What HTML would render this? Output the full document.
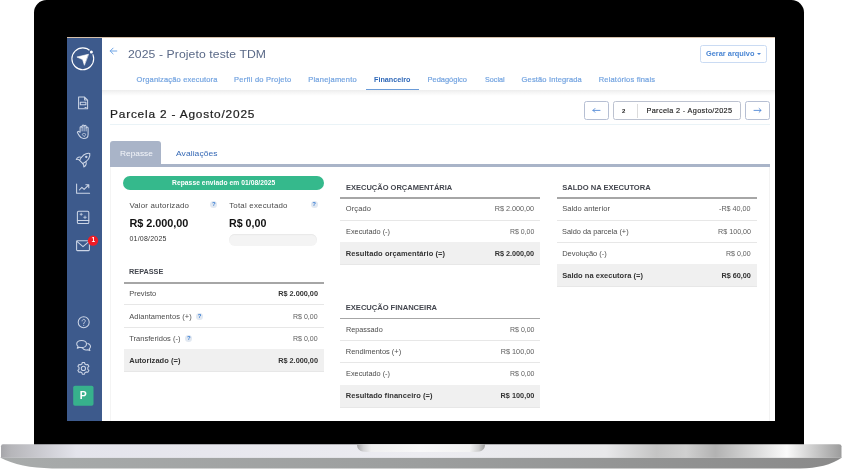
<!DOCTYPE html>
<html lang="pt-BR">
<head>
<meta charset="utf-8">
<title>2025 - Projeto teste TDM</title>
<style>
*{box-sizing:border-box;margin:0;padding:0}
html,body{width:842px;height:470px;overflow:hidden;background:#fff}
body{position:relative;font-family:"Liberation Sans",sans-serif;color:#444}
.abs{position:absolute}
.t{position:absolute;white-space:nowrap;line-height:1;transform-origin:0 50%}
#bezel{left:34px;top:0;width:770.3px;height:444.5px;background:#000;border-radius:12.5px 12.5px 0 0}
#screen{left:67px;top:37px;width:707.6px;height:383.7px;background:#fff;overflow:hidden}
#pg{left:-67px;top:-37px;width:842px;height:470px;will-change:transform}
.ln{position:absolute;height:1px;background:#e7e7e7}
.hl{position:absolute;height:1.5px;background:#a6a6a6}
.gr{position:absolute;background:#f0f0f0}
.q{position:absolute;width:7px;height:7px;border-radius:50%;background:#e1e8f1;color:#3b7fd4;font-size:6px;font-weight:bold;text-align:center;line-height:7.4px}
.btn{position:absolute;border:1px solid #b6bfd3;border-radius:2.5px;background:#fff}
</style>
</head>
<body>
<div id="bezel" class="abs"></div>
<div id="screen" class="abs">
<div id="pg" class="abs">
  <div class="abs" style="left:67px;top:37px;width:708px;height:1px;background:#d6c0aa"></div>
  <div class="abs" style="left:67px;top:38px;width:34.8px;height:384px;background:#3d5a8c"></div>
  <svg class="abs" style="left:67px;top:37px" width="35" height="384" viewBox="67 37 35 384" fill="none" stroke="#ccd5e6" stroke-width="1.05" stroke-linecap="round" stroke-linejoin="round">
    <!-- logo -->
    <circle cx="82.8" cy="58.8" r="10.9" stroke="#fff" stroke-width="1.1"/>
    <circle cx="91.4" cy="52.1" r="2.6" fill="#3d5a8c" stroke="none"/>
    <circle cx="91.4" cy="52.1" r="1.5" fill="#fff" stroke="none"/>
    <path d="M88.3,54.3 L76.9,57 L82.6,59.6 L84.3,64.9 Z" fill="#fff" stroke="#fff" stroke-width=".6"/>
    <!-- file -->
    <path d="M78.6,97 h6 l3,3 v8.8 h-9 z M84.6,97 v3 h3"/>
    <rect x="80.3" y="102.2" width="5.6" height="2.6"/>
    <path d="M85,107.4 h1.2"/>
    <!-- hand -->
    <path d="M80.1,132.2 v-4.600 a1,1 0 0 1 2,0 v-1.700 a1,1 0 0 1 2,0 v0.400 a1,1 0 0 1 2,0 v1.700 a1,1 0 0 1 2,0 v6.400 c0,2.700 -1.900,4.100 -4.500,4.100 c-2.100,0 -3.200,-1 -4.200,-2.600 l-1.900,-3.100 c-0.600,-1 0.800,-1.900 1.600,-1 z"/>
    <path d="M82.1,127.600 v3.400 M84.1,126.300 v4.700 M86.100,128 v3" stroke-width=".9"/>
    <path d="M84,136.400 l-1.500,-1.500 a0.900,0.900 0 0 1 1.500,-1 a0.900,0.900 0 0 1 1.500,1 z" stroke-width=".8"/>
    <!-- rocket -->
    <g transform="translate(85.2,158) rotate(45)">
      <path d="M0,-6.500 C3.200,-4.200 3.700,1 2.300,5.600 H-2.300 C-3.700,1 -3.200,-4.200 0,-6.500 Z"/>
      <circle cx="0" cy="-1.500" r="1.200" fill="#ccd5e6" stroke="none"/>
      <path d="M-3.100,2.200 C-5.400,2.900 -6.100,5.300 -5.300,7.300 C-4.500,6.100 -3.500,5.700 -2.300,5.600 M3.100,2.200 C5.400,2.900 6.100,5.300 5.300,7.300 C4.500,6.100 3.500,5.700 2.300,5.600"/>
    </g>
    <!-- chart -->
    <path d="M76.6,184 v9.3 h13"/>
    <path d="M79.3,190 l2.6,-2.6 l2.2,2 l4.6,-4.4 M85.8,184.8 h3 v3"/>
    <!-- book -->
    <rect x="77.4" y="211.2" width="11.4" height="12.4" rx="1.2"/>
    <path d="M77.4,220.5 h11.4"/>
    <path d="M81.2,213.2 v2.2 M80.1,214.3 h2.2 M85,216 v2.6 M83.7,217.3 h2.6" stroke-width=".8"/>
    <!-- mail -->
    <rect x="76.6" y="240.8" width="12.8" height="9.8" rx=".8"/>
    <path d="M76.9,241.4 l6.1,5.2 l6.1,-5.2"/>
    <circle cx="93" cy="240.6" r="5.2" fill="#ee1c25" stroke="none"/>
    <!-- help -->
    <circle cx="83.7" cy="322.3" r="5.5"/>
    <path d="M82.1,320.9 a1.6,1.6 0 1 1 2.4,1.4 c-0.6,0.4 -0.8,0.7 -0.8,1.4 M83.7,325.3 v0.2" stroke-width=".9"/>
    <!-- chat -->
    <path d="M81.6,340.4 c2.8,0 4.9,1.6 4.9,3.6 c0,2 -2.1,3.6 -4.9,3.6 c-0.7,0 -1.3,-0.1 -1.9,-0.3 l-2.4,1 l0.8,-1.9 c-0.9,-0.6 -1.4,-1.5 -1.4,-2.4 c0,-2 2.100,-3.600 4.900,-3.600 z"/>
    <path d="M87.800,343.400 c1.600,0.500 2.700,1.700 2.700,3.100 c0,0.900 -0.500,1.700 -1.300,2.300 l0.700,1.800 l-2.300,-0.900 c-1.900,0.500 -3.900,0 -4.900,-1.300"/>
    <!-- gear -->
    <circle cx="83.400" cy="368.400" r="2.100"/>
    <path d="M82.300,362.500 h2.200 l0.400,1.500 l1.400,0.800 l1.500,-0.400 l1.100,1.900 l-1.100,1.100 v1.900 l1.100,1.100 l-1.100,1.900 l-1.500,-0.400 l-1.400,0.800 l-0.400,1.500 h-2.200 l-0.400,-1.500 l-1.400,-0.800 l-1.500,0.400 l-1.100,-1.900 l1.100,-1.100 v-1.900 l-1.100,-1.100 l1.100,-1.900 l1.500,0.400 l1.400,-0.800 z"/>
    <!-- P -->
    <rect x="73.2" y="385.8" width="20.3" height="20" rx="1.8" fill="#37b18c" stroke="none"/>
  </svg>

  <!-- header -->
  <svg class="abs" style="left:0;top:0" width="842" height="470" viewBox="0 0 842 470" fill="none" stroke="#6fa5e6" stroke-width="1" stroke-linecap="round" stroke-linejoin="round"><path d="M116.8,51 H110.2 M113.10000000000001,48.1 L110.2,51 L113.10000000000001,53.9"/></svg>
  <div class="btn" style="left:700px;top:45px;width:67px;height:18px;border-color:#cadbf3"></div>
  <div class="abs" style="left:756.7px;top:52.8px;width:0;height:0;border-left:2.2px solid transparent;border-right:2.2px solid transparent;border-top:2.4px solid #4a86d4"></div>
  <div class="abs" style="left:366px;top:88.6px;width:53px;height:1.4px;background:#6a9bd8"></div>
  <div class="abs" style="left:101.7px;top:89.8px;width:673px;height:6.5px;background:linear-gradient(#ededed,#f7f7f7 50%,#fff)"></div>

  <!-- sub header -->
  <div class="abs" style="left:110px;top:124.4px;width:660px;height:1px;background:#eaf3f7"></div>
  <div class="btn" style="left:583.5px;top:101.3px;width:25.2px;height:18.4px"></div>
  <svg class="abs" style="left:0;top:0" width="842" height="470" viewBox="0 0 842 470" fill="none" stroke="#5088d6" stroke-width="0.9" stroke-linecap="round" stroke-linejoin="round"><path d="M600,110.4 H593 M594.9,108.5 L593,110.4 L594.9,112.30000000000001"/></svg>
  <div class="btn" style="left:612.8px;top:101.3px;width:128.2px;height:18.4px;border-color:#bcc2d0"></div>
  <div class="abs" style="left:636.6px;top:104px;width:1px;height:13.6px;background:#dcdcdc"></div>
  <div class="btn" style="left:744.6px;top:101.3px;width:25.2px;height:18.4px"></div>
  <svg class="abs" style="left:0;top:0" width="842" height="470" viewBox="0 0 842 470" fill="none" stroke="#5088d6" stroke-width="0.9" stroke-linecap="round" stroke-linejoin="round"><path d="M754,110.4 H761 M759.1,108.5 L761,110.4 L759.1,112.30000000000001"/></svg>

  <!-- tabs -->
  <div class="abs" style="left:110.1px;top:141.4px;width:51.1px;height:24px;background:#a9b4c8;border-radius:3px 3px 0 0"></div>
  <div class="abs" style="left:110.1px;top:163.8px;width:660px;height:3px;background:#a9b4c8"></div>
  <div class="abs" style="left:769px;top:166.6px;width:1px;height:255px;background:#f3f3f3"></div>
  <div class="abs" style="left:110px;top:166.6px;width:1px;height:255px;background:#f4f4f4"></div>

  <!-- left column -->
  <div class="abs" style="left:123.4px;top:176px;width:200.6px;height:13.9px;border-radius:7px;background:#35b98c"></div>
  <div class="q" style="left:210.4px;top:201.2px">?</div>
  <div class="q" style="left:310.6px;top:201.2px">?</div>
  <div class="abs" style="left:228.6px;top:234px;width:88.8px;height:11.6px;border-radius:5.8px;background:#f4f4f4;box-shadow:inset 0 .8px 1px #e6e6e6"></div>
  <div class="q" style="left:196.2px;top:313px">?</div>
  <div class="q" style="left:185.3px;top:335.1px">?</div>

  <div class="hl" style="left:123.6px;top:282.1px;width:200px"></div>
  <div class="ln" style="left:123.6px;top:304.1px;width:200px"></div>
  <div class="ln" style="left:123.6px;top:326.5px;width:200px"></div>
  <div class="gr" style="left:123.6px;top:349.4px;width:200px;height:21.600000000000023px"></div>
  <div class="ln" style="left:123.6px;top:370.5px;width:200px"></div>
  <div class="hl" style="left:340px;top:197.1px;width:200px"></div>
  <div class="ln" style="left:340px;top:219.9px;width:200px"></div>
  <div class="gr" style="left:340px;top:242.4px;width:200px;height:22.099999999999994px"></div>
  <div class="ln" style="left:340px;top:264.0px;width:200px"></div>
  <div class="hl" style="left:340px;top:317.70000000000005px;width:200px"></div>
  <div class="ln" style="left:340px;top:339.7px;width:200px"></div>
  <div class="ln" style="left:340px;top:362.3px;width:200px"></div>
  <div class="gr" style="left:340px;top:385px;width:200px;height:22.600000000000023px"></div>
  <div class="ln" style="left:340px;top:407.1px;width:200px"></div>
  <div class="hl" style="left:557px;top:197.1px;width:199.5px"></div>
  <div class="ln" style="left:557px;top:219.7px;width:199.5px"></div>
  <div class="ln" style="left:557px;top:241.7px;width:199.5px"></div>
  <div class="gr" style="left:557px;top:264.3px;width:199.5px;height:21.69999999999999px"></div>
  <div class="ln" style="left:557px;top:285.5px;width:199.5px"></div>

  <div class="t" id="t0" style="left:128.3px;top:48.78px;font-size:10.9px;letter-spacing:0.076px;transform:scaleX(1.1200);color:#5a6987">2025 - Projeto teste TDM</div>
  <div class="t" id="t1" style="left:705.9px;top:49.79px;font-size:7.8px;letter-spacing:0.000px;transform:scaleX(0.9484);color:#4a86d4;font-weight:bold">Gerar arquivo</div>
  <div class="t" id="t2" style="left:136.6px;top:76.04px;font-size:7.5px;letter-spacing:0.163px;color:#74a4e0;-webkit-text-stroke:.2px #74a4e0">Organização executora</div>
  <div class="t" id="t3" style="left:234.0px;top:76.04px;font-size:7.5px;letter-spacing:0.245px;color:#74a4e0;-webkit-text-stroke:.2px #74a4e0">Perfil do Projeto</div>
  <div class="t" id="t4" style="left:308.2px;top:76.04px;font-size:7.5px;letter-spacing:0.239px;color:#74a4e0;-webkit-text-stroke:.2px #74a4e0">Planejamento</div>
  <div class="t" id="t5" style="left:427.5px;top:76.04px;font-size:7.5px;letter-spacing:-0.014px;color:#74a4e0;-webkit-text-stroke:.2px #74a4e0">Pedagógico</div>
  <div class="t" id="t6" style="left:484.7px;top:76.04px;font-size:7.5px;letter-spacing:0.000px;transform:scaleX(0.9590);color:#74a4e0;-webkit-text-stroke:.2px #74a4e0">Social</div>
  <div class="t" id="t7" style="left:521.6px;top:76.04px;font-size:7.5px;letter-spacing:0.149px;color:#74a4e0;-webkit-text-stroke:.2px #74a4e0">Gestão Integrada</div>
  <div class="t" id="t8" style="left:598.7px;top:76.04px;font-size:7.5px;letter-spacing:0.190px;color:#74a4e0;-webkit-text-stroke:.2px #74a4e0">Relatórios finais</div>
  <div class="t" id="t9" style="left:374.0px;top:76.04px;font-size:7.5px;letter-spacing:0.000px;transform:scaleX(0.9621);color:#2f68b8;font-weight:bold">Financeiro</div>
  <div class="t" id="t10" style="left:110.0px;top:108.92px;font-size:10.6px;letter-spacing:0.720px;transform:scaleX(1.1200);color:#1e1e1e;-webkit-text-stroke:.2px #1e1e1e">Parcela 2 - Agosto/2025</div>
  <div class="t" id="t11" style="left:622.0px;top:107.57px;font-size:6px;letter-spacing:0.000px;color:#222;font-weight:bold">2</div>
  <div class="t" id="t12" style="left:646.5px;top:106.83px;font-size:7.3px;letter-spacing:0.346px;color:#222;-webkit-text-stroke:.15px #222">Parcela 2 - Agosto/2025</div>
  <div class="t" id="t13" style="left:119.5px;top:150.09px;font-size:7.6px;letter-spacing:0.000px;transform:scaleX(1.0972);color:#f4f6fa">Repasse</div>
  <div class="t" id="t14" style="left:176.0px;top:150.09px;font-size:7.6px;letter-spacing:0.061px;transform:scaleX(1.1200);color:#3568b5">Avaliações</div>
  <div class="t" id="t15" style="left:172.0px;top:179.63px;font-size:6.7px;letter-spacing:0.061px;color:#fff;font-weight:bold">Repasse enviado em 01/08/2025</div>
  <div class="t" id="t16" style="left:129.4px;top:201.54px;font-size:7.9px;letter-spacing:0.181px;color:#4a4a4a">Valor autorizado</div>
  <div class="t" id="t17" style="left:229.2px;top:201.54px;font-size:7.9px;letter-spacing:0.216px;color:#4a4a4a">Total executado</div>
  <div class="t" id="t18" style="left:129.4px;top:217.98px;font-size:10.9px;letter-spacing:-0.034px;color:#111;font-weight:bold">R$ 2.000,00</div>
  <div class="t" id="t19" style="left:229.2px;top:217.98px;font-size:10.9px;letter-spacing:0.000px;transform:scaleX(0.9802);color:#111;font-weight:bold">R$ 0,00</div>
  <div class="t" id="t20" style="left:129.4px;top:234.98px;font-size:7px;letter-spacing:0.228px;color:#333">01/08/2025</div>
  <div class="t" id="t21" style="left:129.2px;top:268.49px;font-size:7.6px;letter-spacing:0.000px;transform:scaleX(0.9599);color:#44474f;font-weight:bold">REPASSE</div>
  <div class="t" id="t22" style="left:129.2px;top:290.34px;font-size:7.5px;letter-spacing:0.001px;color:#4c4c4c">Previsto</div>
  <div class="t" id="t23" style="left:278.2px;top:290.43px;font-size:7.3px;letter-spacing:0.003px;color:#333;font-weight:bold">R$ 2.000,00</div>
  <div class="t" id="t24" style="left:129.2px;top:312.54px;font-size:7.5px;letter-spacing:0.062px;color:#4c4c4c">Adiantamentos (+)</div>
  <div class="t" id="t25" style="left:293.4px;top:312.63px;font-size:7.3px;letter-spacing:0.000px;transform:scaleX(0.9623);color:#606060">R$ 0,00</div>
  <div class="t" id="t26" style="left:129.2px;top:334.64px;font-size:7.5px;letter-spacing:0.021px;color:#4c4c4c">Transferidos (-)</div>
  <div class="t" id="t27" style="left:293.4px;top:334.73px;font-size:7.3px;letter-spacing:0.000px;transform:scaleX(0.9623);color:#606060">R$ 0,00</div>
  <div class="t" id="t28" style="left:129.2px;top:356.54px;font-size:7.5px;letter-spacing:0.052px;color:#333;font-weight:bold">Autorizado (=)</div>
  <div class="t" id="t29" style="left:278.2px;top:356.63px;font-size:7.3px;letter-spacing:0.003px;color:#333;font-weight:bold">R$ 2.000,00</div>
  <div class="t" id="t30" style="left:345.8px;top:183.99px;font-size:7.6px;letter-spacing:0.000px;transform:scaleX(0.9880);color:#44474f;font-weight:bold">EXECUÇÃO ORÇAMENTÁRIA</div>
  <div class="t" id="t31" style="left:345.8px;top:205.34px;font-size:7.5px;letter-spacing:0.118px;color:#4c4c4c">Orçado</div>
  <div class="t" id="t32" style="left:494.8px;top:205.43px;font-size:7.3px;letter-spacing:-0.047px;color:#606060">R$ 2.000,00</div>
  <div class="t" id="t33" style="left:345.8px;top:227.64px;font-size:7.5px;letter-spacing:0.000px;transform:scaleX(0.9771);color:#4c4c4c">Executado (-)</div>
  <div class="t" id="t34" style="left:509.8px;top:227.73px;font-size:7.3px;letter-spacing:0.000px;transform:scaleX(0.9506);color:#606060">R$ 0,00</div>
  <div class="t" id="t35" style="left:345.8px;top:249.84px;font-size:7.5px;letter-spacing:0.075px;color:#333;font-weight:bold">Resultado orçamentário (=)</div>
  <div class="t" id="t36" style="left:494.8px;top:249.93px;font-size:7.3px;letter-spacing:-0.047px;color:#333;font-weight:bold">R$ 2.000,00</div>
  <div class="t" id="t37" style="left:345.8px;top:303.89px;font-size:7.6px;letter-spacing:-0.038px;color:#44474f;font-weight:bold">EXECUÇÃO FINANCEIRA</div>
  <div class="t" id="t38" style="left:345.8px;top:326.14px;font-size:7.5px;letter-spacing:0.000px;transform:scaleX(0.9670);color:#4c4c4c">Repassado</div>
  <div class="t" id="t39" style="left:509.8px;top:326.23px;font-size:7.3px;letter-spacing:0.000px;transform:scaleX(0.9584);color:#606060">R$ 0,00</div>
  <div class="t" id="t40" style="left:345.8px;top:348.34px;font-size:7.5px;letter-spacing:-0.018px;color:#4c4c4c">Rendimentos (+)</div>
  <div class="t" id="t41" style="left:500.8px;top:348.43px;font-size:7.3px;letter-spacing:-0.023px;color:#606060">R$ 100,00</div>
  <div class="t" id="t42" style="left:345.8px;top:370.34px;font-size:7.5px;letter-spacing:0.000px;transform:scaleX(0.9771);color:#4c4c4c">Executado (-)</div>
  <div class="t" id="t43" style="left:509.8px;top:370.43px;font-size:7.3px;letter-spacing:0.000px;transform:scaleX(0.9584);color:#606060">R$ 0,00</div>
  <div class="t" id="t44" style="left:345.8px;top:392.34px;font-size:7.5px;letter-spacing:0.046px;color:#333;font-weight:bold">Resultado financeiro (=)</div>
  <div class="t" id="t45" style="left:500.6px;top:392.43px;font-size:7.3px;letter-spacing:0.002px;color:#333;font-weight:bold">R$ 100,00</div>
  <div class="t" id="t46" style="left:562.2px;top:183.99px;font-size:7.6px;letter-spacing:-0.031px;color:#44474f;font-weight:bold">SALDO NA EXECUTORA</div>
  <div class="t" id="t47" style="left:562.2px;top:205.34px;font-size:7.5px;letter-spacing:0.077px;color:#4c4c4c">Saldo anterior</div>
  <div class="t" id="t48" style="left:719.3px;top:205.43px;font-size:7.3px;letter-spacing:0.000px;transform:scaleX(0.9861);color:#606060">-R$ 40,00</div>
  <div class="t" id="t49" style="left:562.2px;top:227.64px;font-size:7.5px;letter-spacing:0.000px;transform:scaleX(0.9830);color:#4c4c4c">Saldo da parcela (+)</div>
  <div class="t" id="t50" style="left:717.8px;top:227.73px;font-size:7.3px;letter-spacing:0.000px;transform:scaleX(0.9826);color:#606060">R$ 100,00</div>
  <div class="t" id="t51" style="left:562.2px;top:249.64px;font-size:7.5px;letter-spacing:-0.043px;color:#4c4c4c">Devolução (-)</div>
  <div class="t" id="t52" style="left:726.2px;top:249.73px;font-size:7.3px;letter-spacing:0.000px;transform:scaleX(0.9663);color:#606060">R$ 0,00</div>
  <div class="t" id="t53" style="left:562.2px;top:271.84px;font-size:7.5px;letter-spacing:0.022px;color:#333;font-weight:bold">Saldo na executora (=)</div>
  <div class="t" id="t54" style="left:721.6px;top:271.93px;font-size:7.3px;letter-spacing:-0.046px;color:#333;font-weight:bold">R$ 60,00</div>
  <div class="t" id="t55" style="left:91.6px;top:237.48px;font-size:6.6px;letter-spacing:0.000px;color:#fff;font-weight:bold">1</div>
  <div class="t" id="t56" style="left:79.8px;top:390.62px;font-size:10.4px;letter-spacing:0.000px;color:#fff;font-weight:bold">P</div>
</div>
</div>
<svg id="base" class="abs" style="left:0;top:440px" width="842" height="30" viewBox="0 440 842 30">
  <defs>
    <linearGradient id="gl" x1="0" x2="1" y1="0" y2="0">
      <stop offset="0" stop-color="#a6a6aa"/>
      <stop offset="0.012" stop-color="#b6b6ba"/>
      <stop offset="0.09" stop-color="#e4e4ec"/>
      <stop offset="0.5" stop-color="#ececf1"/>
      <stop offset="0.72" stop-color="#e8e8ea"/>
      <stop offset="0.78" stop-color="#c4c4c4"/>
      <stop offset="0.815" stop-color="#d0d0d0"/>
      <stop offset="0.85" stop-color="#b2b2b2"/>
      <stop offset="0.895" stop-color="#d8d8d8"/>
      <stop offset="0.935" stop-color="#fafafa"/>
      <stop offset="0.975" stop-color="#c0c0c0"/>
      <stop offset="1" stop-color="#9c9c9c"/>
    </linearGradient>
    <linearGradient id="gd" x1="0" x2="1" y1="0" y2="0">
      <stop offset="0" stop-color="#a8abab"/>
      <stop offset="0.5" stop-color="#9c9e9e"/>
      <stop offset="1" stop-color="#8a8a8a"/>
    </linearGradient>
    <linearGradient id="gn" x1="0" x2="1" y1="0" y2="0">
      <stop offset="0" stop-color="#a6a6a8"/>
      <stop offset="0.05" stop-color="#d2d2d4"/>
      <stop offset="0.11" stop-color="#efeff0"/>
      <stop offset="0.5" stop-color="#f8f8f9"/>
      <stop offset="0.88" stop-color="#f3f3f3"/>
      <stop offset="0.95" stop-color="#cecece"/>
      <stop offset="1" stop-color="#9e9e9e"/>
    </linearGradient>
  </defs>
  <path d="M0,457.6 L842,457.6 Q826,468.5 800,468.5 L52,468.5 Q20,468 0,457.6 Z" fill="url(#gd)"/>
  <path d="M1,446.3 Q1,444.3 3,444.3 L839,444.3 Q841.5,444.3 841.5,446.3 L841.5,457.8 L1,457.8 Z" fill="url(#gl)"/>
  <path d="M357,444.3 L485,444.3 C485,449.500 482,452 475,452 L367,452 C360,452 357,449.500 357,444.300 Z" fill="url(#gn)"/>
</svg>
</body>
</html>
